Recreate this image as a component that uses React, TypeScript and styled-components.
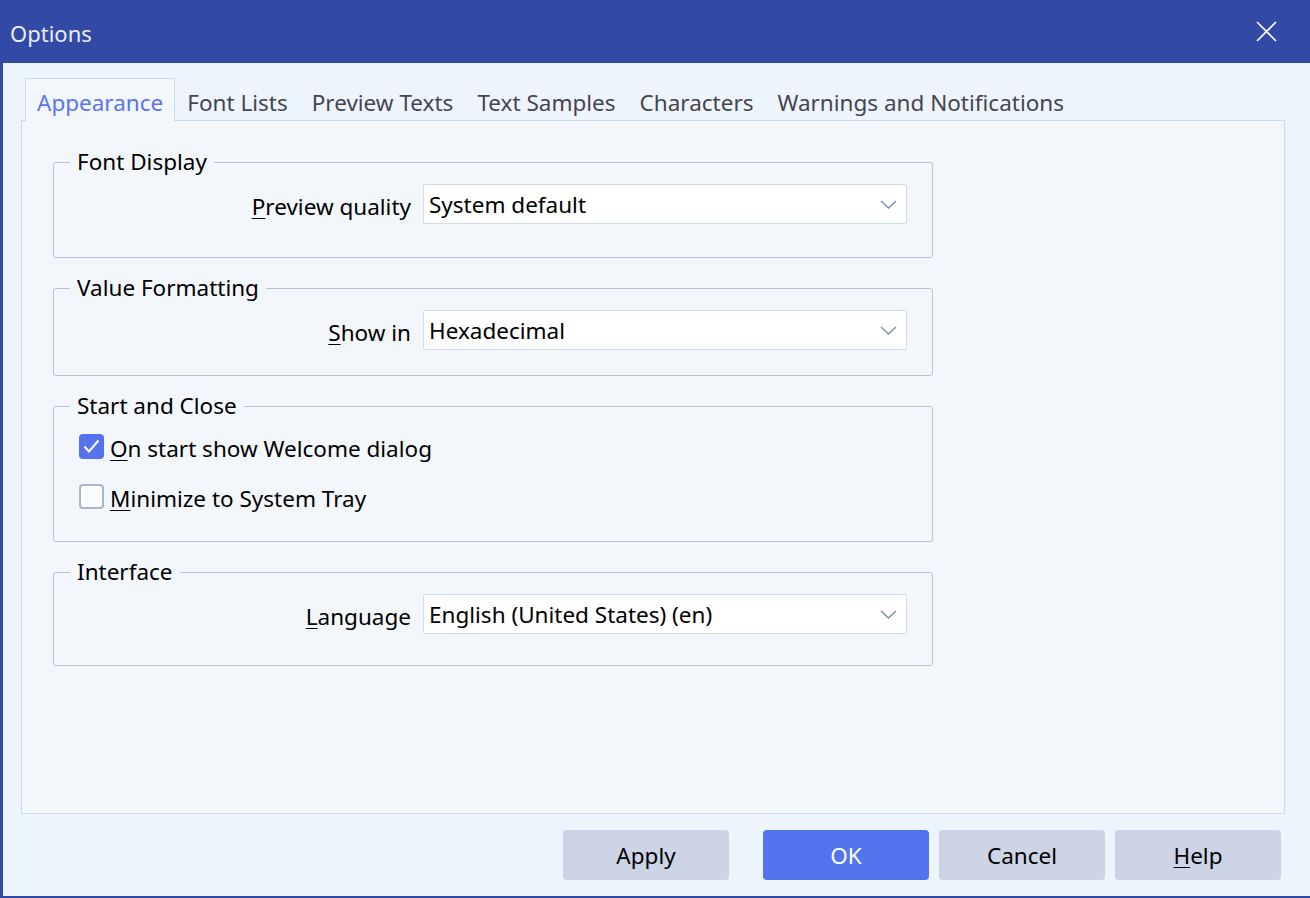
import React from "react";
import styled, { createGlobalStyle } from "styled-components";

const GlobalStyle = createGlobalStyle`
  html, body {
    margin: 0;
    padding: 0;
    background: #eef4fc;
  }
  body {
    font-family: "Noto Sans", "Open Sans", sans-serif;
    font-size: 22.5px;
    color: #000;
  }
`;

const Window = styled.div`
  box-sizing: border-box;
  width: 1310px;
  height: 898px;
  display: flex;
  flex-direction: column;
  background: #eef4fc;
  border-bottom: 2px solid #3249a6;
  overflow: hidden;
`;

const TitleBar = styled.header`
  height: 63px;
  flex: none;
  display: flex;
  align-items: center;
  justify-content: space-between;
  background: #3249a6;
  color: #e8edf9;
  padding: 3px 32px 0 10px;
  box-sizing: border-box;
`;

const Title = styled.span`
  font-size: 22px;
`;

const CloseButton = styled.button`
  width: 24px;
  height: 24px;
  padding: 0;
  margin-top: -3px;
  border: none;
  background: transparent;
  display: flex;
  align-items: center;
  justify-content: center;
`;

const Client = styled.div`
  flex: 1;
  display: flex;
  flex-direction: column;
  border-left: 3px solid #3249a6;
  padding: 15px 25px 0 18px;
`;

const TabStrip = styled.div`
  display: flex;
  padding-left: 4px;
  position: relative;
  z-index: 1;
`;

const Tab = styled.div<{ $active?: boolean }>`
  box-sizing: border-box;
  height: 43px;
  margin-bottom: -1px;
  padding: 4px 11px 0;
  display: flex;
  align-items: center;
  border: 1px solid ${(p) => (p.$active ? "#c8dbf2" : "transparent")};
  border-bottom: none;
  border-radius: 2px 2px 0 0;
  background: ${(p) => (p.$active ? "#f3f7fc" : "transparent")};
  color: ${(p) => (p.$active ? "#5b73ef" : "#45454f")};
  white-space: nowrap;
`;

const Panel = styled.div`
  box-sizing: border-box;
  height: 694px;
  background: #f3f7fc;
  border: 1px solid #c8dbf2;
  padding: 41px 0 0 31px;
  display: flex;
  flex-direction: column;
  gap: 30px;
`;

const Group = styled.section<{ $height: number }>`
  position: relative;
  box-sizing: border-box;
  width: 880px;
  height: ${(p) => p.$height}px;
  border: 1px solid #b4c4da;
  border-radius: 3px;
`;

const Legend = styled.span`
  position: absolute;
  top: -16px;
  left: 16px;
  padding: 0 7px;
  line-height: 30px;
  background: #f3f7fc;
`;

const FieldRow = styled.div`
  display: flex;
  justify-content: flex-end;
  align-items: center;
  gap: 12px;
  padding: 21px 25px 0 0;
`;

const FieldLabel = styled.label`
  margin-top: 4px;
`;

const Select = styled.div`
  box-sizing: border-box;
  width: 484px;
  height: 40px;
  display: flex;
  align-items: center;
  justify-content: space-between;
  padding: 0 9px 0 5px;
  background: #fff;
  border: 1px solid #cfdced;
  border-radius: 2px;
`;

const CheckList = styled.div`
  display: flex;
  flex-direction: column;
  gap: 25px;
  padding: 27px 0 0 25px;
`;

const CheckRow = styled.label`
  display: flex;
  align-items: center;
  gap: 6px;
  height: 25px;
`;

const CheckText = styled.span`
  margin-top: 3px;
`;

const Box = styled.span<{ $checked?: boolean }>`
  box-sizing: border-box;
  width: 25px;
  height: 25px;
  flex: none;
  border-radius: 4px;
  display: flex;
  align-items: center;
  justify-content: center;
  background: ${(p) => (p.$checked ? "#5573ee" : "#fbfcfe")};
  border: ${(p) => (p.$checked ? "none" : "2px solid #a9b5c9")};
`;

const Key = styled.span`
  text-decoration: underline;
  text-underline-offset: 3px;
  text-decoration-thickness: 1px;
`;

const Footer = styled.div`
  display: flex;
  justify-content: flex-end;
  gap: 10px;
  padding: 16px 4px 0 0;
`;

const Button = styled.button<{ $primary?: boolean; $spaced?: boolean }>`
  width: 166px;
  height: 50px;
  border: none;
  border-radius: 4px;
  font: inherit;
  font-size: 22.5px;
  background: ${(p) => (p.$primary ? "#5274ed" : "#ccd4e5")};
  color: ${(p) => (p.$primary ? "#fff" : "#000")};
  margin-right: ${(p) => (p.$spaced ? "24px" : "0")};
  padding: 0;
`;

const Chevron = () => (
  <svg width="17" height="9" viewBox="0 0 17 9">
    <path d="M1 1 L8.5 8 L16 1" fill="none" stroke="#8391b0" strokeWidth="1.5" />
  </svg>
);

const Dropdown = ({ value }: { value: string }) => (
  <Select>
    <span>{value}</span>
    <Chevron />
  </Select>
);

const tabs = [
  "Appearance",
  "Font Lists",
  "Preview Texts",
  "Text Samples",
  "Characters",
  "Warnings and Notifications",
];

export default function App() {
  return (
    <>
      <GlobalStyle />
      <Window>
        <TitleBar>
          <Title>Options</Title>
          <CloseButton aria-label="Close">
            <svg width="21" height="21" viewBox="0 0 21 21">
              <path d="M1 1 L20 20 M20 1 L1 20" stroke="#fff" strokeWidth="1.6" />
            </svg>
          </CloseButton>
        </TitleBar>
        <Client>
          <TabStrip>
            {tabs.map((t, i) => (
              <Tab key={t} $active={i === 0}>
                {t}
              </Tab>
            ))}
          </TabStrip>
          <Panel>
            <Group $height={96}>
              <Legend>Font Display</Legend>
              <FieldRow>
                <FieldLabel>
                  <Key>P</Key>review quality
                </FieldLabel>
                <Dropdown value="System default" />
              </FieldRow>
            </Group>
            <Group $height={88}>
              <Legend>Value Formatting</Legend>
              <FieldRow>
                <FieldLabel>
                  <Key>S</Key>how in
                </FieldLabel>
                <Dropdown value="Hexadecimal" />
              </FieldRow>
            </Group>
            <Group $height={136}>
              <Legend>Start and Close</Legend>
              <CheckList>
                <CheckRow>
                  <Box $checked>
                    <svg width="25" height="25" viewBox="0 0 25 25">
                      <path d="M5.5 12.5 L10 17.5 L19.5 6.5" fill="none" stroke="#fff" strokeWidth="2" />
                    </svg>
                  </Box>
                  <CheckText>
                    <Key>O</Key>n start show Welcome dialog
                  </CheckText>
                </CheckRow>
                <CheckRow>
                  <Box />
                  <CheckText>
                    <Key>M</Key>inimize to System Tray
                  </CheckText>
                </CheckRow>
              </CheckList>
            </Group>
            <Group $height={94}>
              <Legend>Interface</Legend>
              <FieldRow>
                <FieldLabel>
                  <Key>L</Key>anguage
                </FieldLabel>
                <Dropdown value="English (United States) (en)" />
              </FieldRow>
            </Group>
          </Panel>
          <Footer>
            <Button $spaced>Apply</Button>
            <Button $primary>OK</Button>
            <Button>Cancel</Button>
            <Button>
              <Key>H</Key>elp
            </Button>
          </Footer>
        </Client>
      </Window>
    </>
  );
}
